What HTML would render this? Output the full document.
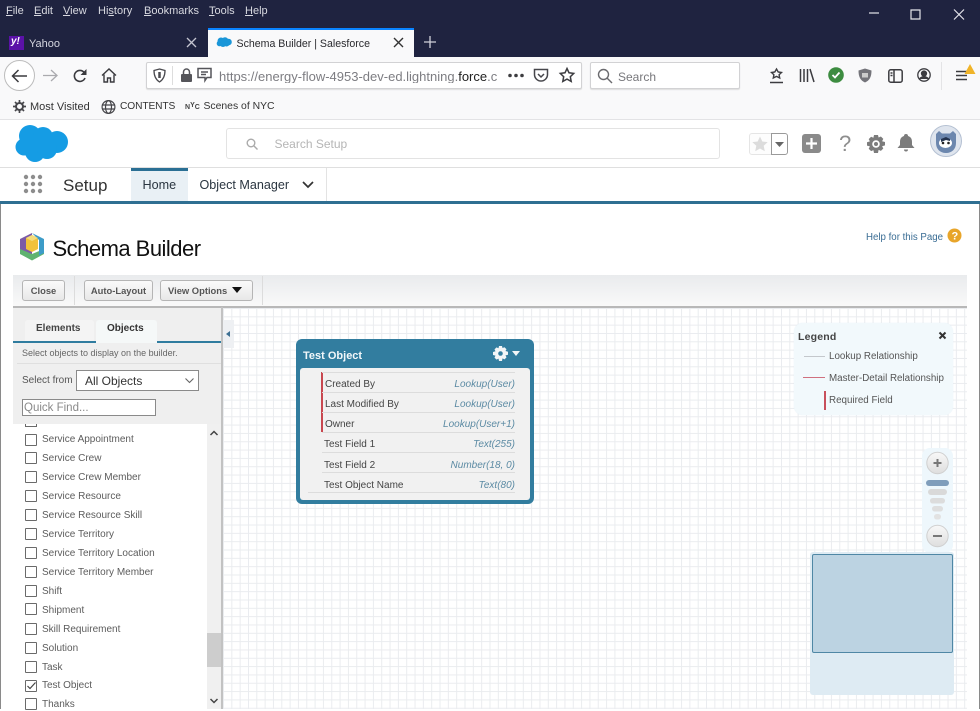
<!DOCTYPE html>
<html><head><meta charset="utf-8"><title>Schema Builder | Salesforce</title>
<style>
html,body{margin:0;padding:0;width:980px;height:709px;overflow:hidden;background:#fff;font-family:"Liberation Sans",sans-serif}
.a{position:absolute}
.t{position:absolute;white-space:nowrap;line-height:1}
u{text-decoration:underline;text-underline-offset:1px}
svg{position:absolute;overflow:visible}
.li{position:absolute;left:42px;font-size:10px;color:#5c5c5c;white-space:nowrap;line-height:12px}
.cb{position:absolute;left:25px;width:10px;height:10px;border:1px solid #6a6a6a;background:#fff;border-radius:1px}
.f{position:absolute;left:324px;font-size:10px;color:#444;white-space:nowrap;line-height:12px}
.ty{position:absolute;right:465px;font-size:10px;color:#5b8aa3;font-style:italic;white-space:nowrap;line-height:12px}
.ln{position:absolute;left:322px;width:193px;height:1px;background:#dcdcdc}
.btn{position:absolute;height:19px;background:linear-gradient(#fafafa,#e8e8e8);border:1px solid #b5b5b5;border-radius:3px;font-size:9.400px;font-weight:bold;color:#555;text-align:center;line-height:20px;box-sizing:content-box}
</style></head><body>
<!-- title bar -->
<div class="a" style="left:0;top:0;width:980px;height:57px;background:#1f2340"></div>
<div class="t" style="left:6px;top:5.500px;font-size:11px;color:#d8d9e0"><u>F</u>ile</div>
<div class="t" style="left:34px;top:5.500px;font-size:11px;color:#d8d9e0"><u>E</u>dit</div>
<div class="t" style="left:63px;top:5.500px;font-size:11px;color:#d8d9e0"><u>V</u>iew</div>
<div class="t" style="left:98px;top:5.500px;font-size:11px;color:#d8d9e0">Hi<u>s</u>tory</div>
<div class="t" style="left:144px;top:5.500px;font-size:11px;color:#d8d9e0"><u>B</u>ookmarks</div>
<div class="t" style="left:209px;top:5.500px;font-size:11px;color:#d8d9e0"><u>T</u>ools</div>
<div class="t" style="left:245px;top:5.500px;font-size:11px;color:#d8d9e0"><u>H</u>elp</div>
<svg style="left:868px;top:6px" width="110" height="16" fill="none" stroke="#e4e4ea" stroke-width="1.2"><path d="M1 7H11"/><path d="M43 4h9v9h-9z"/><path d="M86 3.500l10 10M96 3.500l-10 10"/></svg>
<!-- tabs -->
<div class="a" style="left:9px;top:36px;width:15px;height:14px;background:#5b12a8"></div>
<div class="t" style="left:11px;top:37px;font-size:10px;font-weight:bold;color:#fff;font-style:italic">y!</div>
<div class="t" style="left:29px;top:39px;font-size:11px;color:#d5d6df">Yahoo</div>
<svg style="left:186px;top:37px" width="11" height="11" fill="none" stroke="#c4c5d0" stroke-width="1.3"><path d="M1 1l9 9M10 1l-9 9"/></svg>
<div class="a" style="left:208px;top:28px;width:206px;height:29px;background:#f9f9fa;border-top:2px solid #0a84ff;box-sizing:border-box"></div>
<svg style="left:216px;top:36px" width="16" height="12"><g fill="#1a96d8"><circle cx="5" cy="5" r="3.500"/><circle cx="9" cy="4.500" r="3.300"/><circle cx="12.500" cy="6" r="3.300"/><circle cx="3.500" cy="7.500" r="2.800"/><circle cx="7" cy="8" r="3"/><circle cx="10.500" cy="7.500" r="3"/></g></svg>
<div class="t" style="left:236.500px;top:39px;font-size:10.600px;color:#2a2a2e">Schema Builder | Salesforce</div>
<svg style="left:393px;top:37px" width="11" height="11" fill="none" stroke="#333" stroke-width="1.4"><path d="M1 1l9 9M10 1l-9 9"/></svg>
<svg style="left:423px;top:35px" width="14" height="14" fill="none" stroke="#d0d1da" stroke-width="1.3"><path d="M7 1v12M1 7h12"/></svg>
<!-- nav bar -->
<div class="a" style="left:0;top:57px;width:980px;height:63px;background:#f9f9fa;border-bottom:1px solid #e3e3e5;box-sizing:border-box"></div>
<div class="a" style="left:4px;top:60px;width:31px;height:31px;border:1px solid #bcbcbc;border-radius:50%;background:#fff;box-sizing:border-box"></div>
<svg style="left:11px;top:67px" width="18" height="17" fill="none" stroke="#3a3a3e" stroke-width="1.500"><path d="M1.500 9H16M7.500 3L1.500 9l6 6"/></svg>
<svg style="left:42px;top:68px" width="16" height="15" fill="none" stroke="#aaaaae" stroke-width="1.300"><path d="M1 7.500H15M9 2l6 5.500-6 5.500"/></svg>
<svg style="left:72px;top:68px" width="16" height="15" fill="none" stroke="#3a3a3e" stroke-width="1.600"><path d="M13 10a5.500 5.500 0 1 1-.8-5.500"/><path fill="#3a3a3e" stroke="none" d="M14.500 1v6h-6z"/></svg>
<svg style="left:101px;top:68px" width="16" height="15" fill="none" stroke="#3a3a3e" stroke-width="1.400"><path d="M1 7.500L8 1l7 6.500M3 6.500V14h3.500v-4h3v4H13V6.500"/></svg>
<div class="a" style="left:146px;top:62px;width:436px;height:27px;background:#fff;border:1px solid #d2d2d4;border-radius:2px;box-sizing:border-box;box-shadow:0 1px 1px #ddd"></div>
<svg style="left:153px;top:68px" width="13" height="15" fill="none" stroke="#4a4a4f" stroke-width="1.300"><path d="M6.500 1L12 2.500C12 8 10.500 11.500 6.500 14 2.500 11.500 1 8 1 2.500Z"/><path d="M6.500 4v6" stroke-width="2.500"/></svg>
<div class="a" style="left:172px;top:66px;width:1px;height:19px;background:#ddd"></div>
<svg style="left:180px;top:68px" width="13" height="14"><path fill="none" stroke="#55555a" stroke-width="1.500" d="M3.500 6V4a3 3 0 0 1 6 0v2"/><rect x="1" y="6" width="11" height="8" rx="1" fill="#55555a"/></svg>
<svg style="left:197px;top:67px" width="15" height="15" fill="none" stroke="#55555a" stroke-width="1.500"><path d="M1 1.500h13v9H10l-2 3v-3H1zM4 5h7M4 7.500h5"/></svg>
<div class="t" style="left:219px;top:70px;font-size:13px;color:#7d7d82;width:282px;overflow:hidden;letter-spacing:0">https://energy-flow-4953-dev-ed.lightning.<span style="color:#222">force</span>.c</div>
<svg style="left:508px;top:73px" width="16" height="5" fill="#3d3d40"><circle cx="2" cy="2.500" r="1.800"/><circle cx="8" cy="2.500" r="1.800"/><circle cx="14" cy="2.500" r="1.800"/></svg>
<svg style="left:533px;top:68px" width="16" height="15" fill="none" stroke="#46464b" stroke-width="1.500"><path d="M1.500 1.500h13v5a6.500 6.500 0 0 1-13 0zM5 6l3 3 3-3"/></svg>
<svg style="left:559px;top:67px" width="16" height="16" fill="none" stroke="#3c3c40" stroke-width="1.500"><path d="M8 1.500l2 4.300 4.700.6-3.400 3.300.9 4.700L8 12.100l-4.200 2.300.9-4.700L1.300 6.400 6 5.800z"/></svg>
<div class="a" style="left:590px;top:62px;width:150px;height:27px;background:#fff;border:1px solid #d2d2d4;border-radius:2px;box-sizing:border-box;box-shadow:0 1px 1px #ddd"></div>
<svg style="left:597px;top:68px" width="16" height="16" fill="none" stroke="#6a6a6e" stroke-width="1.400"><circle cx="6.500" cy="6.500" r="5"/><path d="M10 10l5 5"/></svg>
<div class="t" style="left:618px;top:71px;font-size:12px;color:#77777b">Search</div>
<svg style="left:769px;top:68px" width="15" height="16" fill="none" stroke="#3c3c40" stroke-width="1.400"><path d="M7.500 1l1.700 3 3.300.5-2.400 2.300.6 3.200-3.200-1.600-3.200 1.600.6-3.200L2.500 4.500 5.800 4zM1 14.500h13"/></svg>
<svg style="left:799px;top:68px" width="16" height="15" fill="none" stroke="#3c3c40" stroke-width="1.500"><path d="M1.500 1v13M5 1v13M8.500 1v13M11 1l4 13"/></svg>
<svg style="left:828px;top:67px" width="16" height="16"><circle cx="8" cy="8" r="7.800" fill="#3d8c40"/><path d="M4.500 8l2.500 2.500 4.500-5" fill="none" stroke="#fff" stroke-width="1.800"/></svg>
<svg style="left:858px;top:68px" width="14" height="15"><path d="M7 .5L13.500 2.500C13.500 9 11.500 12.500 7 14.500 2.500 12.500.5 9 .5 2.500Z" fill="#74747a"/><rect x="4" y="5" width="6" height="4.500" fill="#ccc"/></svg>
<svg style="left:888px;top:69px" width="15" height="14" fill="none" stroke="#3c3c40" stroke-width="1.500"><rect x=".8" y=".8" width="13.400" height="12.400" rx="2"/><path d="M6 1v12M2.500 4h2M2.500 6.500h2"/></svg>
<svg style="left:917px;top:68px" width="14" height="14" fill="none" stroke="#3c3c40" stroke-width="1.300"><circle cx="7" cy="7" r="6.200"/><circle cx="7" cy="5.500" r="2.500" fill="#3c3c40"/><path d="M2.500 11c2-3 7-3 9 0" fill="#3c3c40"/></svg>
<div class="a" style="left:941px;top:62px;width:1px;height:28px;background:#e4e4e6"></div>
<svg style="left:956px;top:64px" width="20" height="20"><path d="M0 7.500H11M0 11.500H11M0 15.500H11" stroke="#3c3c40" stroke-width="1.500"/><path d="M14 0l5.500 10h-11z" fill="#f0b429"/></svg>
<!-- bookmarks -->
<svg style="left:13px;top:100px" width="13" height="13" fill="none" stroke="#46464a" stroke-width="2"><circle cx="6.500" cy="6.500" r="3.500"/><path stroke-width="1.700" d="M6.500 0v2.500M6.500 10.500V13M0 6.500h2.500M10.500 6.500H13M2 2l1.700 1.700M9.300 9.300L11 11M11 2L9.300 3.700M3.700 9.300L2 11"/></svg>
<div class="t" style="left:30px;top:102px;font-size:11px;color:#333">Most Visited</div>
<svg style="left:101px;top:100px" width="15" height="14" fill="none" stroke="#46464a" stroke-width="1.200"><circle cx="7.500" cy="7" r="6.400"/><ellipse cx="7.500" cy="7" rx="3" ry="6.400"/><path d="M1 5h13M1 9h13"/></svg>
<div class="t" style="left:120px;top:102px;font-size:10.200px;color:#333;letter-spacing:-.1px">CONTENTS</div>
<div class="t" style="left:185px;top:104px;font-size:7px;font-weight:bold;color:#444">N<span style="position:relative;top:-2px">Y</span>C</div>
<div class="t" style="left:203.500px;top:102px;font-size:10.400px;color:#333">Scenes of NYC</div>
<!-- salesforce header -->
<div class="a" style="left:0;top:120px;width:980px;height:47px;background:#fff;border-bottom:1px solid #dfdfdf;box-sizing:content-box"></div>
<svg style="left:0;top:120px" width="80" height="50"><g fill="#159ce4"><circle cx="30" cy="16" r="11"/><circle cx="43" cy="17" r="10"/><circle cx="57" cy="22" r="11"/><circle cx="24" cy="27" r="8.500"/><circle cx="35" cy="32" r="10"/><circle cx="47" cy="29" r="10"/><rect x="22" y="15" width="32" height="16"/></g></svg>
<div class="a" style="left:226px;top:128px;width:494px;height:31px;background:#fff;border:1px solid #e3e3e3;border-radius:3px;box-sizing:border-box"></div>
<svg style="left:246px;top:138px" width="12" height="12" fill="none" stroke="#aaa" stroke-width="1.400"><circle cx="5" cy="5" r="3.800"/><path d="M8 8l3.500 3.500"/></svg>
<div class="t" style="left:274.500px;top:138px;font-size:12px;color:#b5b5b5">Search Setup</div>
<div class="a" style="left:749px;top:133px;width:23px;height:22px;background:#fdfdfd;border:1px solid #e5e5e5;border-radius:3px 0 0 3px;box-sizing:border-box"></div>
<svg style="left:752px;top:136px" width="16" height="16"><path fill="#dcdcdc" d="M8 .5l2.300 5 5.400.6-4 3.700 1.100 5.400L8 12.500 3.200 15.200l1.100-5.400-4-3.700 5.400-.6z"/></svg>
<div class="a" style="left:771px;top:133px;width:17px;height:22px;background:#fff;border:1px solid #9a9a9a;border-radius:0 3px 3px 0;box-sizing:border-box"></div>
<svg style="left:775px;top:142px" width="9" height="5"><path fill="#666" d="M0 0h9L4.500 5z"/></svg>
<svg style="left:802px;top:134px" width="19" height="19"><rect width="19" height="19" rx="3" fill="#8a8a8a"/><path d="M9.500 4v11M4 9.500h11" stroke="#fff" stroke-width="2.200"/></svg>
<div class="t" style="left:839px;top:133px;font-size:22px;color:#8e8e8e">?</div>
<svg style="left:867px;top:135px" width="18" height="18"><path fill="#7c7c7c" d="M7 0h4l.6 2.500 2.300-1 2.400 2.400-1.200 2.300 2.900.8v3.400l-2.900.8 1.200 2.300-2.400 2.400-2.300-1L11 18H7l-.6-2.900-2.300 1-2.400-2.400 1.200-2.300L0 10.600V7.200l2.900-.8L1.700 4.100 4.100 1.700l2.300 1z"/><circle cx="9" cy="9" r="3.800" fill="#fff"/><circle cx="9" cy="9" r="2" fill="#7c7c7c"/></svg>
<svg style="left:897px;top:134px" width="18" height="18"><path fill="#7c7c7c" d="M9 0a2 2 0 0 1 2 2c3 1 4 3 4 6v3l2.500 3H.5L3 11V8c0-3 1-5 4-6a2 2 0 0 1 2-2zM7 15.500h4a2 2 0 0 1-4 0z"/></svg>
<svg style="left:930px;top:125px" width="32" height="32"><circle cx="16" cy="16" r="15.500" fill="#dfe5ee" stroke="#b4c0d2"/><path fill="#6c87ae" d="M6 9l3-3 3 2.500h8L23 6l3 3v9c0 6-4 10-10 10S6 24 6 18z"/><ellipse cx="15.500" cy="18" rx="6.500" ry="5" fill="#fff"/><circle cx="13" cy="18" r="1.300" fill="#222"/><circle cx="18.500" cy="18" r="1.300" fill="#222"/><path fill="#24344f" d="M11 14l5-2 4 2v2l-4-1-5 2z"/></svg>
<!-- nav -->
<div class="a" style="left:0;top:168px;width:980px;height:33px;background:#fff"></div>
<svg style="left:23px;top:174px" width="20" height="20" fill="#8d8d8d"><circle cx="3" cy="3" r="2.200"/><circle cx="10" cy="3" r="2.200"/><circle cx="17" cy="3" r="2.200"/><circle cx="3" cy="10" r="2.200"/><circle cx="10" cy="10" r="2.200"/><circle cx="17" cy="10" r="2.200"/><circle cx="3" cy="17" r="2.200"/><circle cx="10" cy="17" r="2.200"/><circle cx="17" cy="17" r="2.200"/></svg>
<div class="t" style="left:63px;top:177px;font-size:17px;color:#333">Setup</div>
<div class="a" style="left:131px;top:168px;width:57px;height:33px;background:#e9f0f5;border-top:3px solid #2a6f94;box-sizing:border-box"></div>
<div class="t" style="left:142.500px;top:178.500px;font-size:12.600px;color:#2a3540">Home</div>
<div class="t" style="left:199.500px;top:178.500px;font-size:12.600px;color:#2a3540">Object Manager</div>
<svg style="left:302px;top:181px" width="12" height="8" fill="none" stroke="#333" stroke-width="1.700"><path d="M1 1l5 5 5-5"/></svg>
<div class="a" style="left:326px;top:168px;width:1px;height:33px;background:#e3e3e3"></div>
<div class="a" style="left:0;top:201px;width:980px;height:3px;background:#2f6f92"></div>
<div class="a" style="left:0;top:204px;width:1px;height:505px;background:#8a8a8a"></div>
<div class="a" style="left:979px;top:204px;width:1px;height:505px;background:#8a8a8a"></div>
<!-- title -->
<svg style="left:19px;top:232px" width="27" height="29"><path fill="#7c5aa6" d="M13 1L1 7v14l12 7z"/><path fill="#5fb370" d="M1 17l12 5 12-5v5l-12 6.500L1 22z"/><path fill="#f1c23a" d="M7 6l6-3 6 3v11l-6 3-6-3z"/><path fill="#3d9cc8" d="M13 1l12 6v14l-5 2.500V8z"/><path fill="#f5dc7b" d="M7 6l6-3 6 3-6 3z"/></svg>
<div class="t" style="left:52.500px;top:237.500px;font-size:22px;color:#111;letter-spacing:-.52px">Schema Builder</div>
<div class="t" style="left:866px;top:232.500px;font-size:9.700px;color:#3a6d94">Help for this Page</div>
<svg style="left:947px;top:228px" width="15" height="15"><circle cx="7.500" cy="7.500" r="7" fill="#e8a52a"/><text x="4.500" y="11.500" font-size="11" font-weight="bold" fill="#fff" font-family="Liberation Sans">?</text></svg>
<!-- toolbar -->
<div class="a" style="left:13px;top:275px;width:954px;height:33px;background:linear-gradient(#e9ebed,#f9f9f9);border-bottom:2px solid #b8b8b8;box-sizing:border-box"></div>
<div class="a" style="left:74px;top:276px;width:1px;height:29px;background:#dcdcdc"></div>
<div class="a" style="left:262px;top:276px;width:1px;height:29px;background:#dcdcdc"></div>
<div class="btn" style="left:22px;top:280px;width:41px">Close</div>
<div class="btn" style="left:84px;top:280px;width:67px">Auto-Layout</div>
<div class="btn" style="left:160px;top:280px;width:91px;text-align:left;text-indent:7px">View Options</div>
<svg style="left:232px;top:287px" width="10" height="6"><path fill="#111" d="M0 0h10L5 6z"/></svg>
<!-- canvas -->
<div class="a" style="left:223px;top:308px;width:744px;height:401px;background-color:#fff;background-image:linear-gradient(#eaecef 1px,transparent 1px),linear-gradient(90deg,#eaecef 1px,transparent 1px);background-size:8.330px 8.330px;background-position:0 0"></div>
<div class="a" style="left:221px;top:307px;width:2px;height:402px;background:#c2c2c2"></div>
<div class="a" style="left:223px;top:320px;width:11px;height:28px;background:#eef0f3"></div>
<svg style="left:226px;top:331px" width="5" height="6"><path fill="#3d6f92" d="M4 0v6L0 3z"/></svg>
<!-- left panel -->
<div class="a" style="left:13px;top:308px;width:208px;height:401px;background:#fff"></div>
<div class="a" style="left:207px;top:424px;width:14px;height:285px;background:#f0f0f0"></div>
<div class="a" style="left:207px;top:633px;width:14px;height:34px;background:#cdcdcd"></div>
<svg style="left:210px;top:430px" width="8" height="6" fill="none" stroke="#444" stroke-width="1.500"><path d="M.5 5L4 1.500 7.500 5"/></svg>
<svg style="left:210px;top:698px" width="8" height="6" fill="none" stroke="#444" stroke-width="1.500"><path d="M.5 1L4 4.500 7.500 1"/></svg>
<div class="a" style="left:25px;top:424px;width:12px;height:3px;border:1px solid #6a6a6a;border-top:0;box-sizing:border-box"></div>
<div class="a" style="left:13px;top:308px;width:208px;height:116px;background:#efefef"></div>
<div class="a" style="left:25px;top:320px;width:69px;height:21px;background:#f4f4f4;border-radius:3px 3px 0 0"></div>
<div class="a" style="left:96px;top:320px;width:61px;height:23px;background:#f5f8f8;border-radius:3px 3px 0 0;z-index:2"></div>
<div class="t" style="left:36px;top:323.500px;font-size:10px;font-weight:bold;color:#444;z-index:3">Elements</div>
<div class="t" style="left:107px;top:323.500px;font-size:10px;font-weight:bold;color:#333;z-index:3">Objects</div>
<div class="a" style="left:13px;top:341px;width:208px;height:2px;background:#2f7c9f"></div>
<div class="t" style="left:22px;top:349px;font-size:9px;color:#666">Select objects to display on the builder.</div>
<div class="a" style="left:17px;top:363px;width:204px;height:1px;background:#dfdfdf"></div>
<div class="t" style="left:22px;top:376px;font-size:10px;color:#555">Select from</div>
<div class="a" style="left:76px;top:370px;width:123px;height:21px;background:#fff;border:1px solid #8a8a8a;box-sizing:border-box"></div>
<div class="t" style="left:85px;top:375px;font-size:12px;color:#333">All Objects</div>
<svg style="left:185px;top:378px" width="9" height="6" fill="none" stroke="#666" stroke-width="1.100"><path d="M.5 .5l4 4 4-4"/></svg>
<div class="a" style="left:22px;top:399px;width:134px;height:17px;background:#fff;border:1px solid #8a8a8a;box-sizing:border-box"></div>
<div class="t" style="left:24px;top:402.500px;font-size:11.500px;color:#8a8a8a">Quick Find...</div>
<div class="cb" style="top:434px"></div><div class="li" style="top:434px">Service Appointment</div>
<div class="cb" style="top:452px"></div><div class="li" style="top:453px">Service Crew</div>
<div class="cb" style="top:471px"></div><div class="li" style="top:472px">Service Crew Member</div>
<div class="cb" style="top:490px"></div><div class="li" style="top:491px">Service Resource</div>
<div class="cb" style="top:509px"></div><div class="li" style="top:510px">Service Resource Skill</div>
<div class="cb" style="top:528px"></div><div class="li" style="top:529px">Service Territory</div>
<div class="cb" style="top:547px"></div><div class="li" style="top:548px">Service Territory Location</div>
<div class="cb" style="top:566px"></div><div class="li" style="top:567px">Service Territory Member</div>
<div class="cb" style="top:585px"></div><div class="li" style="top:586px">Shift</div>
<div class="cb" style="top:603px"></div><div class="li" style="top:605px">Shipment</div>
<div class="cb" style="top:623px"></div><div class="li" style="top:624px">Skill Requirement</div>
<div class="cb" style="top:642px"></div><div class="li" style="top:643px">Solution</div>
<div class="cb" style="top:661px"></div><div class="li" style="top:662px">Task</div>
<div class="cb" style="top:680px"></div><div class="li" style="top:680px">Test Object</div>
<svg style="left:26px;top:681px" width="11" height="10" fill="none" stroke="#444" stroke-width="1.200"><path d="M1.500 5l2.500 2.500L9.500 1.500"/></svg>
<div class="cb" style="top:698px"></div><div class="li" style="top:699px">Thanks</div>
<!-- object card -->
<div class="a" style="left:296px;top:339px;width:238px;height:165px;background:#327d9f;border-radius:6px"></div>
<div class="t" style="left:303px;top:351px;font-size:11px;font-weight:bold;color:#f2f7fa">Test Object</div>
<svg style="left:493px;top:346px" width="15" height="15"><path fill="#f2f5f7" d="M6 0h3l.5 2 2-.8 2 2-1 1.800 2.500.8v3l-2.500.6 1 2-2 2-2-1L9 15H6l-.5-2.400-2 1-2-2 1-2L0 9V6l2.500-.8-1-1.800 2-2 2 .8z"/><circle cx="7.500" cy="7.500" r="2.300" fill="#327d9f"/></svg>
<svg style="left:512px;top:351px" width="8" height="5"><path fill="#f2f5f7" d="M0 0h8L4 5z"/></svg>
<div class="a" style="left:300px;top:368px;width:230px;height:132px;background:#f1f1f1;border-radius:3px"></div>
<div class="a" style="left:321px;top:372px;width:2px;height:60px;background:#c8474f"></div>
<div class="ln" style="top:372px"></div><div class="ln" style="top:392px"></div><div class="ln" style="top:412px"></div><div class="ln" style="top:432px"></div><div class="ln" style="top:452px"></div><div class="ln" style="top:472px"></div><div class="ln" style="top:492px;left:308px;width:207px"></div>
<div class="f" style="top:379px;left:325px">Created By</div><div class="ty" style="top:379px">Lookup(User)</div>
<div class="f" style="top:399px;left:325px">Last Modified By</div><div class="ty" style="top:399px">Lookup(User)</div>
<div class="f" style="top:419px;left:325px">Owner</div><div class="ty" style="top:419px">Lookup(User+1)</div>
<div class="f" style="top:439px">Test Field 1</div><div class="ty" style="top:439px">Text(255)</div>
<div class="f" style="top:460px">Test Field 2</div><div class="ty" style="top:460px">Number(18, 0)</div>
<div class="f" style="top:480px">Test Object Name</div><div class="ty" style="top:480px">Text(80)</div>
<!-- legend -->
<div class="a" style="left:794px;top:323px;width:159px;height:92px;background:#f2f9fc;border-radius:9px;box-shadow:0 0 1px #dcecf4"></div>
<div class="t" style="left:798px;top:332px;font-size:10.500px;font-weight:bold;color:#444;letter-spacing:.2px">Legend</div>
<svg style="left:939px;top:332px" width="7" height="7" stroke="#333" stroke-width="2"><path d="M.5 .5l6 6M6.500 .5l-6 6"/></svg>
<div class="a" style="left:804px;top:356px;width:21px;height:1px;background:#c4c8cc"></div>
<div class="t" style="left:829px;top:352px;font-size:9.800px;color:#555">Lookup Relationship</div>
<div class="a" style="left:803px;top:377px;width:22px;height:1px;background:#d0707f"></div>
<div class="t" style="left:829px;top:374px;font-size:9.800px;color:#555">Master-Detail Relationship</div>
<div class="a" style="left:824px;top:391px;width:2px;height:19px;background:#c8505c"></div>
<div class="t" style="left:829px;top:396px;font-size:9.800px;color:#555">Required Field</div>
<!-- zoom control -->
<div class="a" style="left:922px;top:448px;width:31px;height:105px;background:#eef7fc;border-radius:8px"></div>
<svg style="left:924px;top:451px" width="27" height="98"><defs><linearGradient id="g" x1="0" y1="0" x2="0" y2="1"><stop offset="0" stop-color="#f8f8f8"/><stop offset="1" stop-color="#dedede"/></linearGradient></defs><circle cx="13.500" cy="12" r="10.700" fill="url(#g)" stroke="#cfcfcf"/><path d="M13.500 8v8M9.500 12h8" stroke="#777" stroke-width="2"/><rect x="2" y="29" width="23" height="6" rx="3" fill="#7f9dbb"/><rect x="4" y="38" width="19" height="6" rx="3" fill="#d9d9d9"/><rect x="6" y="47" width="15" height="5.500" rx="2.700" fill="#dcdcdc"/><rect x="8" y="55" width="11" height="5.500" rx="2.700" fill="#dedede"/><rect x="10" y="63" width="7" height="5.500" rx="2.700" fill="#e2e2e2"/><circle cx="13.500" cy="85" r="10.700" fill="url(#g)" stroke="#cfcfcf"/><path d="M9 85h9" stroke="#777" stroke-width="2"/></svg>
<!-- overview -->
<div class="a" style="left:810px;top:552px;width:144px;height:143px;background:#deebf3;border-radius:3px"></div>
<div class="a" style="left:812px;top:554px;width:141px;height:99px;background:#bcd3e2;border:1px solid #4f87a5;border-radius:2px;box-sizing:border-box"></div>
</body></html>
